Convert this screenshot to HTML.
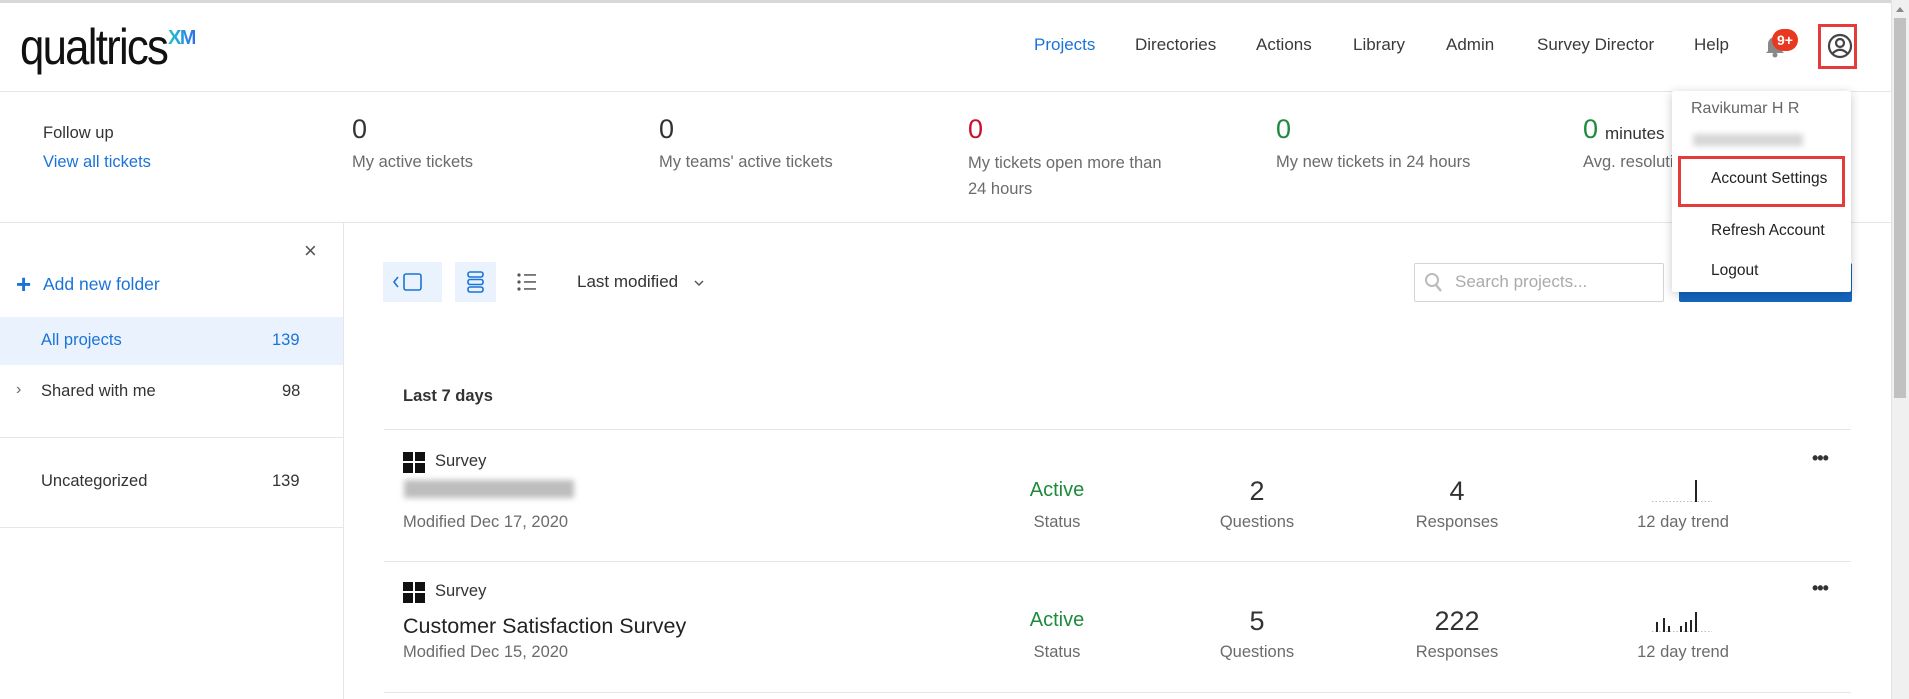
<!DOCTYPE html>
<html><head><meta charset="utf-8"><style>
*{margin:0;padding:0;box-sizing:border-box}
body{width:1909px;height:699px;overflow:hidden;background:#fff;font-family:"Liberation Sans",sans-serif;color:#333;position:relative}
.a{position:absolute;white-space:nowrap}
.nav{top:35px;font-size:17px;color:#3a3a3a}
.num{font-size:27px;color:#333}
.lbl{font-size:16.5px;color:#6b6b6b}
.hl{position:absolute;height:1px;background:#e6e6e6}
.c{transform:translateX(-50%);text-align:center}
</style></head><body>
<div class="a" style="left:0;top:0;width:1909px;height:3px;background:#d8d8d8"></div>
<!-- logo -->
<div class="a" style="left:20px;top:18px;font-size:50px;color:#111;letter-spacing:-2px;transform:scaleX(0.875);transform-origin:left">qualtrics</div>
<div class="a" style="left:168px;top:27px;font-size:20px;font-weight:bold;letter-spacing:-1.5px;background:linear-gradient(90deg,#21c7c2,#2d6ff0);-webkit-background-clip:text;color:transparent">XM</div>
<!-- nav -->
<div class="a nav" style="left:1034px;color:#1a73d9">Projects</div>
<div class="a nav" style="left:1135px">Directories</div>
<div class="a nav" style="left:1256px">Actions</div>
<div class="a nav" style="left:1353px">Library</div>
<div class="a nav" style="left:1446px">Admin</div>
<div class="a nav" style="left:1537px">Survey Director</div>
<div class="a nav" style="left:1694px">Help</div>
<svg class="a" style="left:1764px;top:34px" width="22" height="24" viewBox="0 0 22 24"><path d="M4 17 V10 a7 7 0 0 1 14 0 V17 L20 19 H2 Z" fill="#888"/><circle cx="11" cy="21" r="2.5" fill="#888"/></svg>
<div class="a" style="left:1772px;top:29px;width:26px;height:22px;border-radius:11px;background:#e8381f;color:#fff;font-size:14px;font-weight:bold;text-align:center;line-height:22px">9+</div>
<div class="a" style="left:1818px;top:24px;width:39px;height:45px;border:3px solid #e53b3b"></div>
<svg class="a" style="left:1827px;top:33px" width="26" height="26" viewBox="0 0 26 26"><circle cx="13" cy="13" r="11" fill="none" stroke="#444" stroke-width="2.2"/><circle cx="13" cy="10" r="4" fill="none" stroke="#444" stroke-width="2.2"/><path d="M5.5 20.5 Q13 13 20.5 20.5" fill="none" stroke="#444" stroke-width="2.2"/></svg>
<div class="hl" style="left:0;top:91px;width:1891px"></div>
<!-- stats -->
<div class="a" style="left:43px;top:124px;font-size:16.5px;color:#333">Follow up</div>
<div class="a" style="left:43px;top:153px;font-size:16.5px;color:#1a73d9">View all tickets</div>
<div class="a num" style="left:352px;top:114px">0</div><div class="a lbl" style="left:352px;top:153px">My active tickets</div>
<div class="a num" style="left:659px;top:114px">0</div><div class="a lbl" style="left:659px;top:153px">My teams' active tickets</div>
<div class="a num" style="left:968px;top:114px;color:#c8102e">0</div><div class="a lbl" style="left:968px;top:150px;line-height:26px;white-space:normal;width:200px">My tickets open more than 24 hours</div>
<div class="a num" style="left:1276px;top:114px;color:#1e8a3c">0</div><div class="a lbl" style="left:1276px;top:153px">My new tickets in 24 hours</div>
<div class="a num" style="left:1583px;top:114px;color:#1e8a3c">0</div><div class="a" style="left:1605px;top:124px;font-size:17px;color:#333">minutes</div><div class="a lbl" style="left:1583px;top:153px">Avg. resolution</div>
<div class="hl" style="left:0;top:222px;width:1891px"></div>
<!-- sidebar -->
<div class="a" style="left:343px;top:222px;width:1px;height:477px;background:#e6e6e6"></div>
<div class="a" style="left:304px;top:238px;font-size:22px;color:#555">×</div>
<div class="a" style="left:16px;top:269px;font-size:26px;color:#1a73d9;font-weight:bold">+</div>
<div class="a" style="left:43px;top:274px;font-size:17.5px;color:#1a73d9">Add new folder</div>
<div class="a" style="left:0;top:317px;width:343px;height:48px;background:#eaf3fd"></div>
<div class="a" style="left:41px;top:331px;font-size:16.5px;color:#1a73d9">All projects</div>
<div class="a" style="left:272px;top:331px;font-size:16.5px;color:#1a73d9">139</div>
<div class="a" style="left:16px;top:381px;font-size:16px;color:#666">›</div>
<div class="a" style="left:41px;top:382px;font-size:16.5px;color:#333">Shared with me</div>
<div class="a" style="left:282px;top:382px;font-size:16.5px;color:#333">98</div>
<div class="hl" style="left:0;top:437px;width:343px"></div>
<div class="a" style="left:41px;top:472px;font-size:16.5px;color:#333">Uncategorized</div>
<div class="a" style="left:272px;top:472px;font-size:16.5px;color:#333">139</div>
<div class="hl" style="left:0;top:527px;width:343px"></div>
<!-- toolbar -->
<div class="a" style="left:383px;top:262px;width:59px;height:40px;background:#eaf3fd"></div>
<svg class="a" style="left:390px;top:271px" width="44" height="22" viewBox="0 0 44 22"><path d="M8 6 L4 11 L8 16" fill="none" stroke="#1a73d9" stroke-width="1.6"/><rect x="14" y="3" width="17" height="16" rx="2" fill="none" stroke="#1a73d9" stroke-width="1.6"/></svg>
<div class="a" style="left:455px;top:262px;width:41px;height:40px;background:#eaf3fd"></div>
<svg class="a" style="left:466px;top:271px" width="20" height="22" viewBox="0 0 20 22"><rect x="2" y="1" width="15" height="5" rx="2" fill="none" stroke="#1a73d9" stroke-width="1.6"/><rect x="2" y="8.5" width="15" height="5" rx="2" fill="none" stroke="#1a73d9" stroke-width="1.6"/><rect x="2" y="16" width="15" height="5" rx="2" fill="none" stroke="#1a73d9" stroke-width="1.6"/></svg>
<svg class="a" style="left:516px;top:272px" width="22" height="20" viewBox="0 0 22 20"><g fill="#555"><circle cx="3" cy="3" r="1.6"/><circle cx="3" cy="10" r="1.6"/><circle cx="3" cy="17" r="1.6"/><rect x="8" y="2.2" width="12" height="1.5"/><rect x="8" y="9.2" width="12" height="1.5"/><rect x="8" y="16.2" width="12" height="1.5"/></g></svg>
<div class="a" style="left:577px;top:272px;font-size:17px;color:#333">Last modified</div>
<svg class="a" style="left:693px;top:278px" width="12" height="10" viewBox="0 0 12 10"><path d="M2 3 L6 7 L10 3" fill="none" stroke="#555" stroke-width="1.5"/></svg>
<div class="a" style="left:1414px;top:263px;width:250px;height:39px;border:1px solid #d4d4d4;border-radius:2px"></div>
<svg class="a" style="left:1424px;top:272px" width="20" height="22" viewBox="0 0 20 22"><circle cx="8" cy="8" r="6" fill="none" stroke="#bbb" stroke-width="2"/><path d="M12 13 L17 19" stroke="#bbb" stroke-width="2.4"/></svg>
<div class="a" style="left:1455px;top:272px;font-size:17px;color:#aaa">Search projects...</div>
<div class="a" style="left:1679px;top:263px;width:173px;height:39px;background:#1565c0;border-radius:2px"></div>
<!-- list -->
<div class="a" style="left:403px;top:387px;font-size:16.5px;font-weight:bold;color:#333">Last 7 days</div>
<div class="hl" style="left:384px;top:429px;width:1467px"></div>
<!-- row 1 -->
<svg class="a" style="left:403px;top:452px" width="22" height="21" viewBox="0 0 22 21"><g fill="#111"><rect x="0" y="0" width="10" height="9"/><rect x="12" y="0" width="10" height="9"/><rect x="0" y="11" width="10" height="10"/><rect x="12" y="11" width="10" height="10"/></g></svg>
<div class="a" style="left:435px;top:452px;font-size:16.5px;color:#333">Survey</div>
<div class="a" style="left:404px;top:480px;width:170px;height:18px;background:#bdbdbd;filter:blur(3px)"></div>
<div class="a" style="left:403px;top:513px;font-size:16.5px;color:#6b6b6b">Modified Dec 17, 2020</div>
<div class="a c" style="left:1057px;top:479px;font-size:20px;color:#1e8a3c">Active</div>
<div class="a c lbl" style="left:1057px;top:513px">Status</div>
<div class="a c num" style="left:1257px;top:476px">2</div>
<div class="a c lbl" style="left:1257px;top:513px">Questions</div>
<div class="a c num" style="left:1457px;top:476px">4</div>
<div class="a c lbl" style="left:1457px;top:513px">Responses</div>
<svg class="a" style="left:1652px;top:478px" width="60" height="25" viewBox="0 0 60 25"><path d="M0 23.5 H60" stroke="#bbb" stroke-width="1" stroke-dasharray="1.5 2"/><rect x="43" y="2" width="2" height="22" fill="#222"/></svg>
<div class="a c lbl" style="left:1683px;top:513px">12 day trend</div>
<div class="a" style="left:1812px;top:448px;font-size:18px;font-weight:bold;color:#333;letter-spacing:-1px">•••</div>
<div class="hl" style="left:384px;top:561px;width:1467px"></div>
<!-- row 2 -->
<svg class="a" style="left:403px;top:582px" width="22" height="21" viewBox="0 0 22 21"><g fill="#111"><rect x="0" y="0" width="10" height="9"/><rect x="12" y="0" width="10" height="9"/><rect x="0" y="11" width="10" height="10"/><rect x="12" y="11" width="10" height="10"/></g></svg>
<div class="a" style="left:435px;top:582px;font-size:16.5px;color:#333">Survey</div>
<div class="a" style="left:403px;top:614px;font-size:21.5px;color:#222">Customer Satisfaction Survey</div>
<div class="a" style="left:403px;top:643px;font-size:16.5px;color:#6b6b6b">Modified Dec 15, 2020</div>
<div class="a c" style="left:1057px;top:609px;font-size:20px;color:#1e8a3c">Active</div>
<div class="a c lbl" style="left:1057px;top:643px">Status</div>
<div class="a c num" style="left:1257px;top:606px">5</div>
<div class="a c lbl" style="left:1257px;top:643px">Questions</div>
<div class="a c num" style="left:1457px;top:606px">222</div>
<div class="a c lbl" style="left:1457px;top:643px">Responses</div>
<svg class="a" style="left:1652px;top:608px" width="60" height="25" viewBox="0 0 60 25"><path d="M0 23.5 H60" stroke="#bbb" stroke-width="1" stroke-dasharray="1.5 2"/><g fill="#222"><rect x="4" y="14" width="2" height="10"/><rect x="11" y="10" width="2" height="14"/><rect x="16" y="18" width="2" height="6"/><rect x="28" y="18" width="2" height="6"/><rect x="33" y="14" width="2" height="10"/><rect x="38" y="12" width="2" height="12"/><rect x="43" y="4" width="2" height="20"/></g></svg>
<div class="a c lbl" style="left:1683px;top:643px">12 day trend</div>
<div class="a" style="left:1812px;top:578px;font-size:18px;font-weight:bold;color:#333;letter-spacing:-1px">•••</div>
<div class="hl" style="left:384px;top:692px;width:1467px"></div>
<!-- dropdown -->
<div class="a" style="left:1672px;top:91px;width:179px;height:201px;background:#fff;box-shadow:0 2px 10px rgba(0,0,0,.22);border-radius:2px"></div>
<div class="a" style="left:1691px;top:100px;font-size:16px;color:#666">Ravikumar H R</div>
<div class="a" style="left:1693px;top:134px;width:110px;height:12px;background:#d6d6d6;filter:blur(3px)"></div>
<div class="a" style="left:1678px;top:156px;width:167px;height:51px;border:3px solid #e53b3b"></div>
<div class="a" style="left:1711px;top:170px;font-size:15.5px;color:#222">Account Settings</div>
<div class="a" style="left:1711px;top:222px;font-size:15.5px;color:#222">Refresh Account</div>
<div class="a" style="left:1711px;top:262px;font-size:15.5px;color:#222">Logout</div>
<!-- scrollbar -->
<div class="a" style="left:1891px;top:0;width:18px;height:699px;background:#f0f0f0;border-left:1px solid #e2e2e2"></div>
<div class="a" style="left:1894px;top:18px;width:12px;height:380px;background:#c1c1c1"></div>
<svg class="a" style="left:1895px;top:5px" width="10" height="8" viewBox="0 0 10 8"><path d="M1 7 L5 2 L9 7Z" fill="#888"/></svg>
</body></html>
